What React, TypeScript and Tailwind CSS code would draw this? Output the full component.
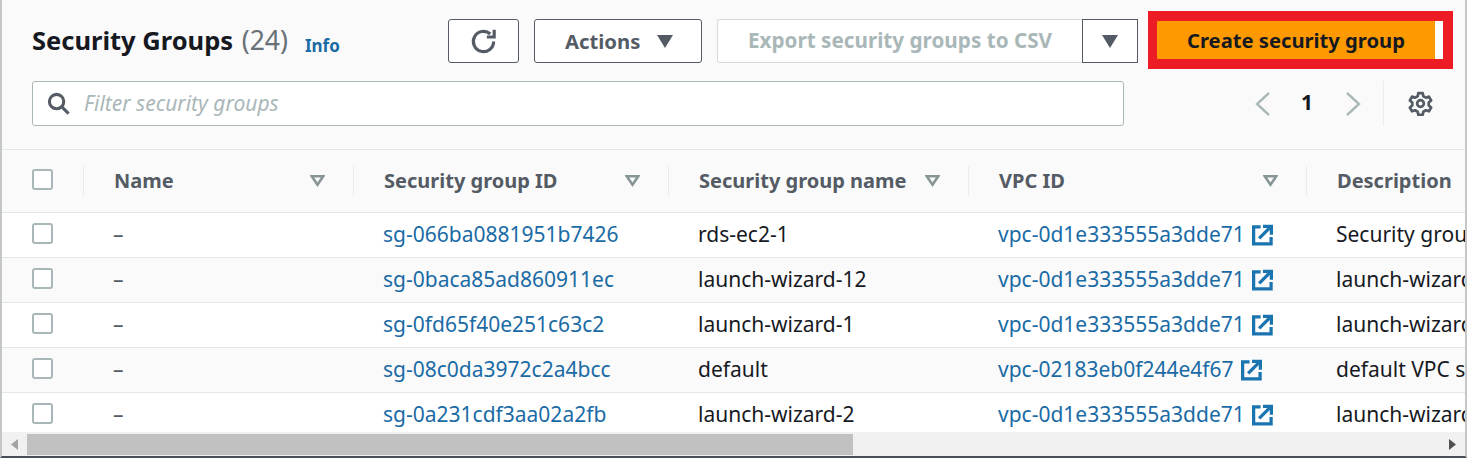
import React from "react";

const rows = [
  { id: "sg-066ba0881951b7426", name: "rds-ec2-1", vpc: "vpc-0d1e333555a3dde71", desc: "Security group" },
  { id: "sg-0baca85ad860911ec", name: "launch-wizard-12", vpc: "vpc-0d1e333555a3dde71", desc: "launch-wizard-12" },
  { id: "sg-0fd65f40e251c63c2", name: "launch-wizard-1", vpc: "vpc-0d1e333555a3dde71", desc: "launch-wizard-1" },
  { id: "sg-08c0da3972c2a4bcc", name: "default", vpc: "vpc-02183eb0f244e4f67", desc: "default VPC security" },
  { id: "sg-0a231cdf3aa02a2fb", name: "launch-wizard-2", vpc: "vpc-0d1e333555a3dde71", desc: "launch-wizard-2" },
];

const gridCols = "grid grid-cols-[81px_270px_315px_300px_338px_1fr]";

function Caret({ className }: { className?: string }) {
  return (
    <svg viewBox="0 0 16 13" className={className}>
      <path d="M0 0h16L8 13z" fill="currentColor" />
    </svg>
  );
}

function SortCaret() {
  return (
    <svg viewBox="0 0 16 13" className="w-[15px] h-[12px] text-[#879596]">
      <path d="M1.8 1.4h12.4L8 10.5z" fill="none" stroke="currentColor" strokeWidth="2.8" />
    </svg>
  );
}

function Checkbox() {
  return <span className="block w-[21px] h-[21px] -mt-[3px] rounded-[3px] border-2 border-[#aab7b8] bg-white" />;
}

function ExternalIcon() {
  return (
    <svg viewBox="0 0 22 22" className="w-[21px] h-[22px] text-[#1a74b0] shrink-0" fill="none" stroke="currentColor" strokeWidth="3.4">
      <path d="M9 2.5H1.7v17.8H20V13" />
      <path d="M7.5 14.5 19 3" />
      <path d="M11.5 2h8.8v8.8" />
    </svg>
  );
}

function HeaderCell({ label, caretRight }: { label: string; caretRight?: number }) {
  return (
    <div className="flex items-center h-full">
      <div className="w-px h-[30px] bg-[#eaeded]" />
      <span className="ml-[30px] text-[20px] font-bold text-[#545b64] whitespace-nowrap">{label}</span>
      {caretRight !== undefined && (
        <span className="ml-auto flex" style={{ marginRight: caretRight }}>
          <SortCaret />
        </span>
      )}
    </div>
  );
}

export default function App() {
  return (
    <div className="w-[1467px] h-[458px] overflow-hidden flex flex-col bg-[#fafafa] text-[#16191f] border-l-2 border-l-[#c4c7c7] border-r-2 border-r-[#c4c7c7] border-b-2 border-b-[#4a4f57] font-['Noto_Sans',sans-serif]">
      {/* Toolbar */}
      <div className="h-[150px] shrink-0 border-b border-[#e4e7e7] pl-[30px] flex flex-col">
        <div className="flex items-center h-[58px] mt-[11px]">
          <div className="w-[416px] flex items-center mt-[2px] whitespace-nowrap">
            <h1 className="text-[25.5px] font-bold">
              Security Groups <span className="ml-[2px] text-[26.5px] font-normal text-[#687078]">(24)</span>
            </h1>
            <a className="ml-[17px] mt-[9px] text-[17px] font-bold text-[#1a6ba5]">Info</a>
          </div>
          <button className="mt-[2px] w-[71px] h-[44px] flex items-center justify-center border border-[#545b64] rounded-[3px] bg-white text-[#545b64]">
            <svg viewBox="0 0 24 24" className="w-[27px] h-[27px]" fill="none" stroke="currentColor" strokeWidth="2.8">
              <path d="M21 12a9 9 0 1 1-3-6.7" />
              <path d="M21.5 1.5v6.5h-6.5" />
            </svg>
          </button>
          <button className="mt-[2px] ml-[15px] w-[168px] h-[44px] flex items-center pl-[30px] gap-[17px] border border-[#545b64] rounded-[3px] bg-white text-[20.3px] font-bold text-[#545b64]">
            Actions
            <Caret className="w-[16px] h-[13px]" />
          </button>
          <div className="mt-[2px] ml-[15px] flex h-[44px]">
            <div className="w-[365px] flex items-center justify-center border border-r-0 border-[#d5dbdb] rounded-l-[3px] bg-white text-[20.7px] font-bold text-[#aab7b8]">
              Export security groups to CSV
            </div>
            <button className="w-[56px] flex items-center justify-center border border-[#545b64] bg-white text-[#545b64]">
              <Caret className="w-[16px] h-[13px]" />
            </button>
          </div>
          <div className="ml-[10px] w-[305px] h-[58px] flex bg-[#ed1c24] pl-[9px] pr-[10px] py-[10px]">
            <button className="flex-1 bg-[#ff9900] text-[20.2px] font-bold text-[#16191f] whitespace-nowrap">
              Create security group
            </button>
            <div className="w-[8px] bg-white" />
          </div>
        </div>
        <div className="flex items-center mt-[12px] h-[45px]">
          <div className="w-[1092px] h-[45px] flex items-center border border-[#aab7b8] rounded-[3px] bg-white">
            <svg viewBox="0 0 24 24" className="ml-[14px] w-[23px] h-[23px] text-[#545b64]" fill="none" stroke="currentColor" strokeWidth="3.2">
              <circle cx="10" cy="10" r="7.5" />
              <path d="m15.5 15.5 7 7" />
            </svg>
            <span className="ml-[14px] text-[21px] italic text-[#aab7b8]">Filter security groups</span>
          </div>
          <div className="flex items-center h-[45px] ml-[131px]">
            <svg viewBox="0 0 16 26" className="w-[16px] h-[26px] text-[#aab7b8]" fill="none" stroke="currentColor" strokeWidth="2.4">
              <path d="M14 2 2 13l12 11" />
            </svg>
            <span className="ml-[29px] -mt-[2px] w-[14px] text-[21px] font-bold text-center">1</span>
            <svg viewBox="0 0 16 26" className="ml-[31px] w-[16px] h-[26px] text-[#aab7b8]" fill="none" stroke="currentColor" strokeWidth="2.4">
              <path d="m2 2 12 11L2 24" />
            </svg>
            <div className="ml-[22px] w-px h-[45px] bg-[#eaeded]" />
            <svg viewBox="0 0 24 24" className="ml-[24px] w-[25px] h-[25px] text-[#545b64]" fill="none" stroke="currentColor" strokeWidth="2.6" strokeLinejoin="round">
              <path d="M9.9 2h4.2l.6 3 2.5 1.4 2.9-1 2.1 3.6-2.3 2v2.9l2.3 2-2.1 3.6-2.9-1-2.5 1.4-.6 3H9.9l-.6-3-2.5-1.4-2.9 1-2.1-3.6 2.3-2v-2.9l-2.3-2 2.1-3.6 2.9 1 2.5-1.4z" />
              <circle cx="12" cy="12" r="3.2" />
            </svg>
          </div>
        </div>
      </div>

      {/* Table */}
      <div className="flex-1 min-h-0 overflow-hidden">
        <div className={`${gridCols} h-[63px] items-center border-b border-[#e4e7e7]`}>
          <div className="pl-[30px]"><Checkbox /></div>
          <HeaderCell label="Name" caretRight={28} />
          <HeaderCell label="Security group ID" caretRight={28} />
          <HeaderCell label="Security group name" caretRight={28} />
          <HeaderCell label="VPC ID" caretRight={28} />
          <HeaderCell label="Description" />
        </div>
        {rows.map((r, i) => (
          <div key={r.id} className={`${gridCols} h-[45px] items-center border-b border-[#e4e7e7] text-[21px] whitespace-nowrap ${i % 2 === 0 ? "bg-white" : "bg-[#fafafa]"}`}>
            <div className="pl-[30px]"><Checkbox /></div>
            <div className="pl-[30px] text-[#545b64]">–</div>
            <div className="pl-[30px] text-[#1a6ba5]">{r.id}</div>
            <div className="pl-[30px]">{r.name}</div>
            <div className="pl-[30px] flex items-center gap-[7px] text-[#1a6ba5]">
              {r.vpc}
              <ExternalIcon />
            </div>
            <div className="pl-[30px] overflow-hidden">{r.desc}</div>
          </div>
        ))}
      </div>

      {/* Scrollbar */}
      <div className="h-[24px] shrink-0 flex items-center bg-[#f1f1f1]">
        <div className="w-[25px] flex justify-center text-[#a3a3a3]">
          <svg viewBox="0 0 7 11" className="w-[7px] h-[11px]"><path d="M7 0v11L0 5.5z" fill="currentColor" /></svg>
        </div>
        <div className="w-[826px] h-[21px] bg-[#c1c1c1]" />
        <div className="ml-auto w-[25px] flex justify-center text-[#505050]">
          <svg viewBox="0 0 7 11" className="w-[7px] h-[11px]"><path d="M0 0v11l7-5.5z" fill="currentColor" /></svg>
        </div>
      </div>
    </div>
  );
}
